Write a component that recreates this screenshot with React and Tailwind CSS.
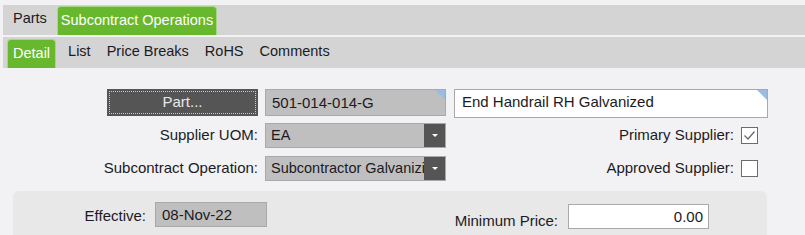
import React from 'react';

const Corner = () => (
  <span className="absolute right-0 top-0 h-0 w-0 border-l-[10px] border-t-[10px] border-l-transparent border-t-[#9dbbe0]" />
);

const Select = ({ value }) => (
  <div className="flex h-[25px] w-[181px] items-stretch border border-[#a9a9a9] bg-[#bfbfbf]">
    <div className="flex-1 overflow-hidden whitespace-nowrap pl-[5px] text-[14.5px] leading-[23px]">{value}</div>
    <div className="flex w-[21px] items-center justify-center bg-[#555555]">
      <span className="h-0 w-0 border-x-[3px] border-t-[3px] border-x-transparent border-t-white" />
    </div>
  </div>
);

const Check = ({ checked }) => (
  <div className="ml-[7px] flex h-[17px] w-[17px] items-center justify-center border border-[#6b6b6b] bg-white">
    {checked && (
      <svg width="13" height="11" viewBox="0 0 13 11">
        <path d="M1.5 5.5 L5 9 L11.5 1.5" fill="none" stroke="#666" strokeWidth="1.2" />
      </svg>
    )}
  </div>
);

const subTabs = ['List', 'Price Breaks', 'RoHS', 'Comments'];

export default function App() {
  return (
    <div className="h-[235px] w-[805px] overflow-hidden bg-[#f2f2f4] pt-[5px] text-[15px] text-[#1c1a24]" style={{ fontFamily: '"Liberation Sans", Arial, sans-serif' }}>
      {/* top tabs */}
      <div className="ml-[3px] flex h-[30px] items-end bg-[#d4d4d4] pl-[10px] text-[14.5px]">
        <div className="pb-[5px] pr-[10px]">Parts</div>
        <div className="flex h-[29px] items-center rounded-t-[4px] border border-b-0 border-[#a6d883] bg-[#68b82e] px-[3px] text-white">Subcontract Operations</div>
      </div>
      <div className="ml-[3px] mt-[2px] flex h-[31px] items-end gap-[16px] bg-[#d4d4d4] pl-[4px] text-[14.5px]">
        <div className="mr-[-4px] flex h-[29px] items-center rounded-t-[4px] border border-b-0 border-[#a6d883] bg-[#68b82e] px-[5px] text-white">Detail</div>
        {subTabs.map(t => (
          <div key={t} className="pb-[5px]">{t}</div>
        ))}
      </div>

      {/* form */}
      <div className="mt-[21px] flex flex-col gap-[7px]">
        <div className="flex h-[27px] items-center">
          <div className="ml-[107px] flex h-[27px] w-[151px] items-center justify-center bg-[#555555] p-[2px]">
            <div className="flex h-full w-full items-center justify-center border border-dotted border-[#c8c8c8] text-[#e8e8ec]">Part...</div>
          </div>
          <div className="relative ml-[7px] h-[27px] w-[181px] border border-[#a9a9a9] bg-[#bfbfbf] pl-[6px] leading-[25px]">
            501-014-014-G
            <Corner />
          </div>
          <div className="relative ml-[8px] h-[29px] w-[314px] self-start border border-[#a9a9a9] bg-white pl-[7px] leading-[24px]">
            End Handrail RH Galvanized
            <Corner />
          </div>
        </div>
        <div className="flex h-[25px] items-center">
          <div className="w-[258px] text-right">Supplier UOM:</div>
          <div className="ml-[7px]"><Select value="EA" /></div>
          <div className="flex w-[312px] items-center justify-end">Primary Supplier:<Check checked /></div>
        </div>
        <div className="flex h-[26px] items-center">
          <div className="w-[258px] text-right">Subcontract Operation:</div>
          <div className="ml-[7px]"><Select value="Subcontractor Galvanizi" /></div>
          <div className="flex w-[312px] items-center justify-end">Approved Supplier:<Check /></div>
        </div>
      </div>

      {/* bottom panel */}
      <div className="ml-[13px] mt-[10px] h-[60px] w-[754px] rounded-t-[6px] bg-[#e8e8e8] pt-[11px]">
        <div className="flex items-start">
          <div className="w-[133px] pt-[3px] text-right">Effective:</div>
          <div className="ml-[9px] h-[25px] w-[112px] border border-[#a9a9a9] bg-[#bfbfbf] pl-[6px] leading-[23px]">08-Nov-22</div>
          <div className="w-[291px] pt-[8px] text-right">Minimum Price:</div>
          <div className="ml-[10px] mt-[2px] h-[25px] w-[141px] border border-[#a9a9a9] bg-white pr-[5px] text-right leading-[23px]">0.00</div>
        </div>
      </div>
    </div>
  );
}
